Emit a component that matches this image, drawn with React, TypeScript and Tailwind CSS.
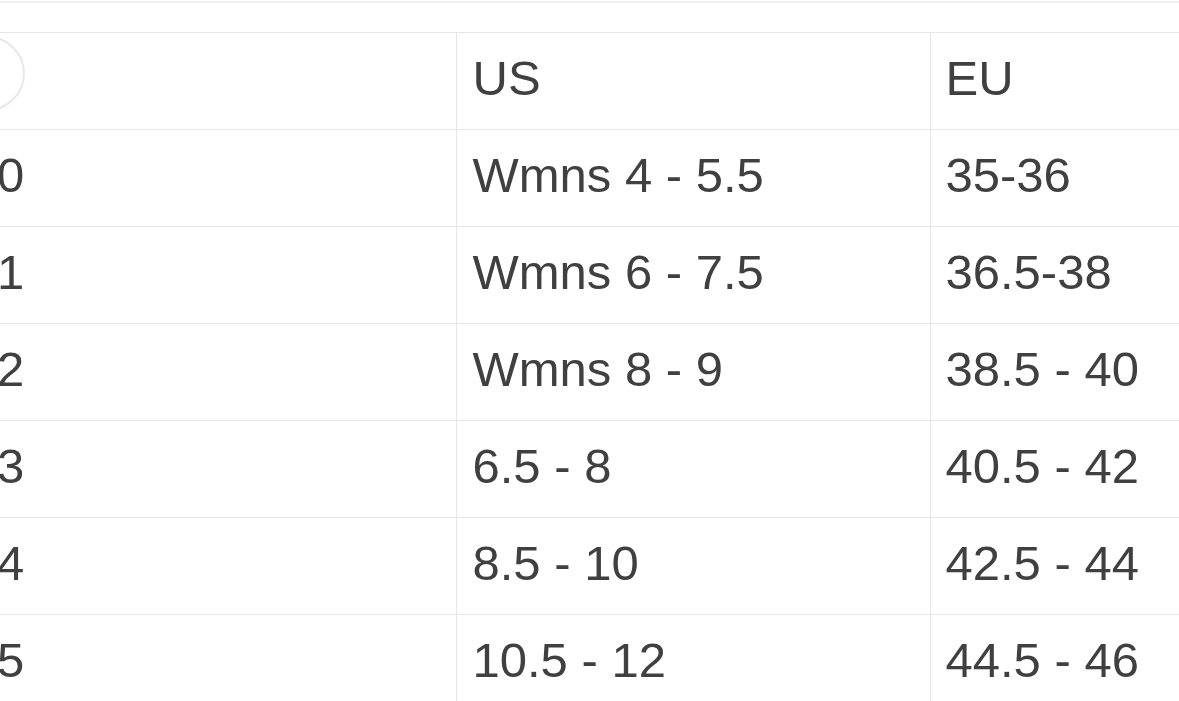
import React from "react";

interface SizeRow {
    size: string;
    us: string;
    eu: string;
}

const rows: SizeRow[] = [
    { size: "0", us: "Wmns 4 - 5.5", eu: "35-36" },
    { size: "1", us: "Wmns 6 - 7.5", eu: "36.5-38" },
    { size: "2", us: "Wmns 8 - 9", eu: "38.5 - 40" },
    { size: "3", us: "6.5 - 8", eu: "40.5 - 42" },
    { size: "4", us: "8.5 - 10", eu: "42.5 - 44" },
    { size: "5", us: "10.5 - 12", eu: "44.5 - 46" },
    { size: "6", us: "12.5 - 14", eu: "46.5 - 48" },
];

const cellClass =
    "h-[97px] border-r border-b border-[#e6e6e6] align-middle text-left font-normal pb-[6px]";

const App: React.FC = () => {
    return (
        <div
            className="w-[1179px] h-[701px] overflow-hidden bg-white text-[#404040]"
            style={{ fontFamily: '"Liberation Sans", Arial, sans-serif' }}
        >
            <div className="h-[2px] mt-[1px] bg-[#f0f0f0]" />
            <table className="mt-[29px] ml-[-20px] border-collapse border-t border-[#e6e6e6] table-fixed w-[1300px] text-[49px] leading-none">
                <colgroup>
                    <col className="w-[476px]" />
                    <col className="w-[474px]" />
                    <col className="w-[350px]" />
                </colgroup>
                <thead>
                    <tr>
                        <th className={`${cellClass} relative`}>
                            <div className="absolute left-[-30px] top-[3px] w-[75px] h-[75px] rounded-full border-2 border-[#e8e8e8]" />
                        </th>
                        <th className={`${cellClass} pl-[16px]`}>US</th>
                        <th className={`${cellClass} pl-[15px]`}>EU</th>
                    </tr>
                </thead>
                <tbody>
                    {rows.map((row) => (
                        <tr key={row.size}>
                            <td className={`${cellClass} pl-[17px]`}>{row.size}</td>
                            <td className={`${cellClass} pl-[16px]`}>{row.us}</td>
                            <td className={`${cellClass} pl-[15px]`}>{row.eu}</td>
                        </tr>
                    ))}
                </tbody>
            </table>
        </div>
    );
};

export default App;
